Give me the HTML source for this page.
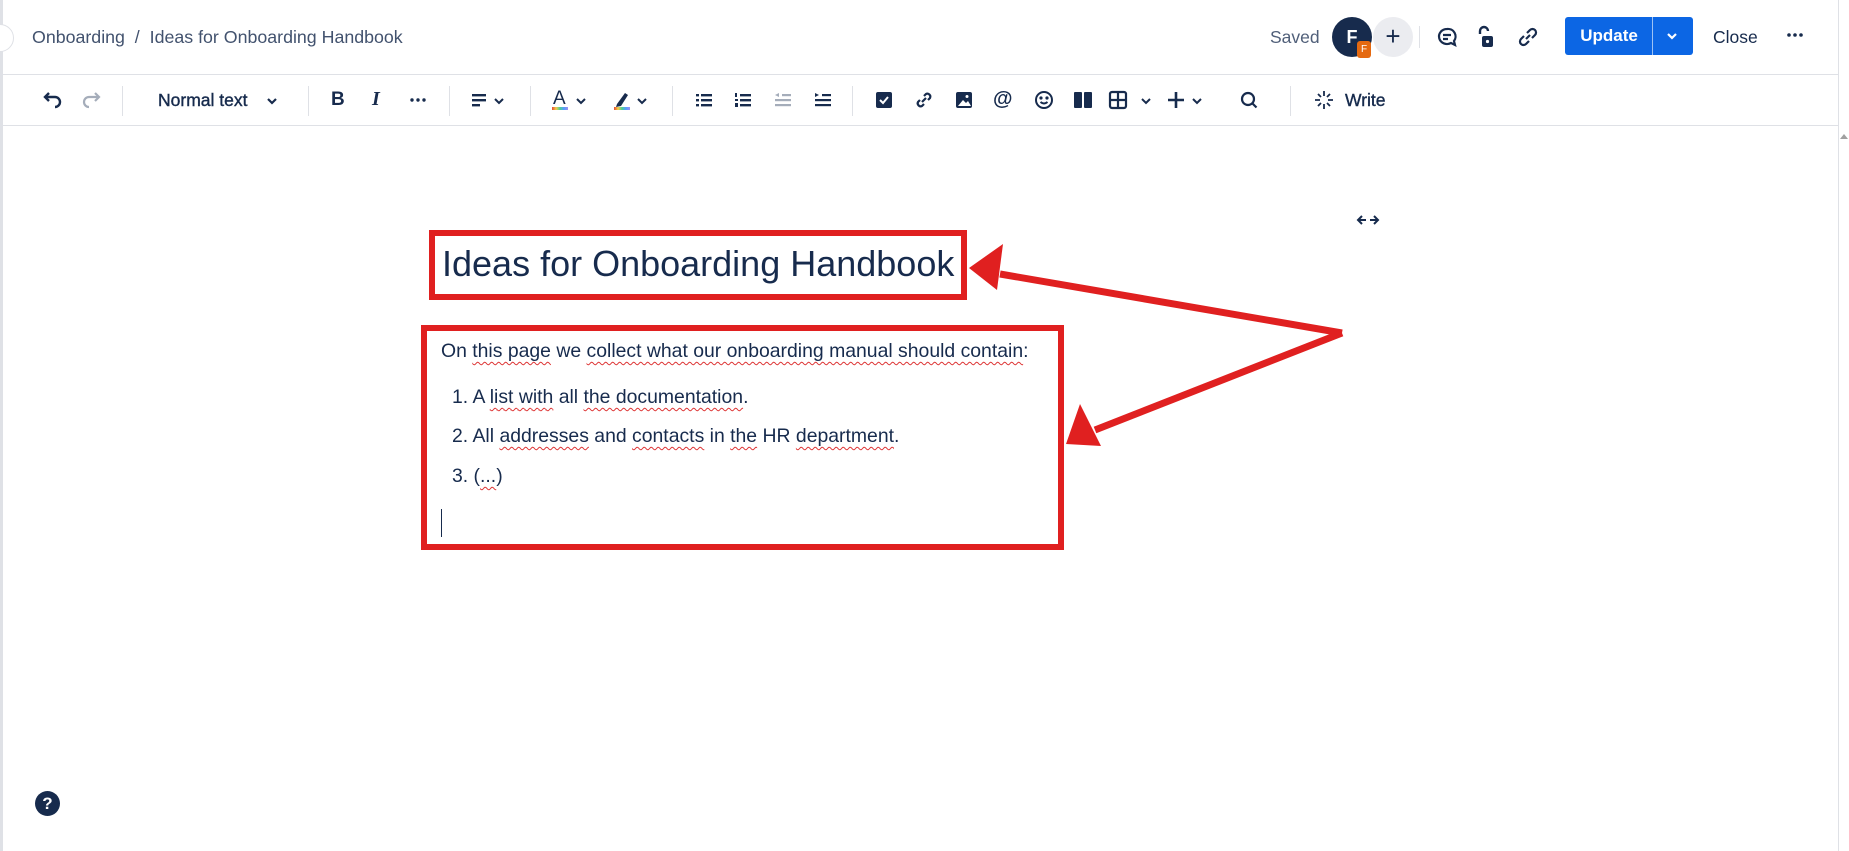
<!DOCTYPE html>
<html><head><meta charset="utf-8"><style>
*{margin:0;padding:0;box-sizing:border-box}
body{width:1849px;height:851px;position:relative;background:#fff;font-family:"Liberation Sans",sans-serif;color:#172b4d;overflow:hidden}
.a{position:absolute}
.t{position:absolute;white-space:nowrap}
.ic{position:absolute;top:89px;width:22px;height:22px}
.sep{position:absolute;top:86px;width:1px;height:30px;background:#dfe1e6}
.sq{text-decoration:underline wavy #d33;text-decoration-thickness:1px;text-underline-offset:4px}
</style></head><body>
<div class="a" style="left:0;top:0;width:3px;height:851px;background:#dfe1e6"></div>
<div class="a" style="left:-14px;top:24px;width:28px;height:28px;border-radius:50%;border:1px solid #dfe1e6;background:#fff"></div>
<div class="t" style="left:32px;top:27px;font-size:17.8px;color:#42526e">Onboarding &nbsp;/ &nbsp;Ideas for Onboarding Handbook</div>
<div class="t" style="left:1270px;top:27px;font-size:17.5px;color:#505f79">Saved</div>
<div class="a" style="left:1373px;top:17px;width:40px;height:40px;border-radius:50%;background:#ebecf0;text-align:center;line-height:38px;font-size:26px;color:#172b4d">+</div>
<div class="a" style="left:1332px;top:17px;width:40px;height:40px;border-radius:50%;background:#172b4d;color:#fff;text-align:center;line-height:40px;font-size:18px;font-weight:bold">F</div>
<div class="a" style="left:1357px;top:41px;width:14px;height:17px;border-radius:3px;background:#e56910;color:#fff;font-size:10px;text-align:center;line-height:17px">F</div>
<div class="a" style="left:1419px;top:26px;width:1px;height:22px;background:#dfe1e6"></div>
<svg class="a" style="left:1436px;top:26px" width="22" height="22" viewBox="0 0 22 22" fill="none" stroke="#172b4d" stroke-width="2.2"><path d="M11 3a8 7.5 0 1 0 4 14l4 2-1-4a7.5 7.5 0 0 0-7-12z"/><path d="M7 9h8M7 13h5"/></svg>
<svg class="a" style="left:1476px;top:25px" width="20" height="24" viewBox="0 0 20 24"><path d="M4 9V6a4 4 0 0 1 8 0" fill="none" stroke="#172b4d" stroke-width="2.4"/><rect x="6" y="11" width="11" height="11" rx="2" fill="#172b4d"/><circle cx="11.5" cy="16.5" r="1.6" fill="#fff"/></svg>
<svg class="a" style="left:1516px;top:25px" width="24" height="24" viewBox="0 0 24 24" fill="none" stroke="#172b4d" stroke-width="2.2"><path d="M10 14l4-4M8 11l-3 3a3.5 3.5 0 0 0 5 5l3-3M16 13l3-3a3.5 3.5 0 0 0-5-5l-3 3"/></svg>
<div class="a" style="left:1565px;top:17px;width:128px;height:38px;border-radius:3px;background:#0c66e4"></div>
<div class="t" style="left:1565px;top:26px;width:88px;text-align:center;color:#fff;font-size:17px;font-weight:bold">Update</div>
<div class="a" style="left:1652px;top:17px;width:1px;height:38px;background:#fff;opacity:.6"></div>
<svg class="a" style="left:1666px;top:31px" width="12" height="10" viewBox="0 0 12 10" fill="none" stroke="#fff" stroke-width="2.2"><path d="M2 3l4 4 4-4"/></svg>
<div class="t" style="left:1713px;top:27px;font-size:17.5px;color:#172b4d">Close</div>
<svg class="a" style="left:1787px;top:33px" width="16" height="4"><circle cx="2" cy="2" r="1.8" fill="#172b4d"/><circle cx="8" cy="2" r="1.8" fill="#172b4d"/><circle cx="14" cy="2" r="1.8" fill="#172b4d"/></svg>
<div class="a" style="left:0;top:74px;width:1838px;height:1px;background:#dfe1e6"></div>
<div class="a" style="left:0;top:125px;width:1838px;height:1px;background:#dfe1e6"></div>
<div class="a" style="left:1838px;top:0;width:11px;height:851px;background:#fff;border-left:1px solid #dfe1e6"></div>
<svg class="a" style="left:1840px;top:133px" width="8" height="8"><path d="M0 6l4-5 4 5z" fill="#a0a0a0"/></svg>

<!-- toolbar -->
<svg class="ic" style="left:41px" viewBox="0 0 22 22" fill="none" stroke="#172b4d" stroke-width="2.4"><path d="M5 8h9a5 5 0 0 1 0 10"/><path d="M8 4L4 8l4 4"/></svg>
<svg class="ic" style="left:81px" viewBox="0 0 22 22" fill="none" stroke="#a5adba" stroke-width="2.2"><path d="M17 8H8a5 5 0 0 0 0 10"/><path d="M14 4l4 4-4 4"/></svg>
<div class="sep" style="left:122px"></div>
<div class="t" style="left:158px;top:90px;font-size:17.5px;color:#172b4d;-webkit-text-stroke:0.4px #172b4d">Normal text</div>
<svg class="a" style="left:266px;top:96px" width="12" height="10" viewBox="0 0 12 10" fill="none" stroke="#172b4d" stroke-width="2.2"><path d="M2 3l4 4 4-4"/></svg>
<div class="sep" style="left:308px"></div>
<div class="t" style="left:331px;top:89px;font-size:19px;font-weight:bold">B</div>
<div class="t" style="left:372px;top:88px;font-size:20px;font-style:italic;font-family:'Liberation Serif',serif;font-weight:bold">I</div>
<svg class="a" style="left:410px;top:98px" width="16" height="4"><circle cx="2" cy="2" r="1.7" fill="#172b4d"/><circle cx="8" cy="2" r="1.7" fill="#172b4d"/><circle cx="14" cy="2" r="1.7" fill="#172b4d"/></svg>
<div class="sep" style="left:449px"></div>
<svg class="ic" style="left:470px" viewBox="0 0 22 22" fill="#172b4d"><rect x="2" y="5" width="14" height="2.4"/><rect x="2" y="10" width="14" height="2.4"/><rect x="2" y="15" width="8" height="2.4"/></svg>
<svg class="a" style="left:493px;top:96px" width="12" height="10" viewBox="0 0 12 10" fill="none" stroke="#172b4d" stroke-width="2"><path d="M2 3l4 4 4-4"/></svg>
<div class="sep" style="left:530px"></div>
<div class="t" style="left:553px;top:88px;font-size:19px">A</div>
<div class="a" style="left:552px;top:107px;width:16px;height:3px;background:linear-gradient(90deg,#e34935,#f5cd47,#4bce97,#579dff,#9f8fef)"></div>
<svg class="a" style="left:575px;top:96px" width="12" height="10" viewBox="0 0 12 10" fill="none" stroke="#172b4d" stroke-width="2"><path d="M2 3l4 4 4-4"/></svg>
<svg class="ic" style="left:612px" viewBox="0 0 22 22" fill="#172b4d"><path d="M5 15l8-11 3 2-7 11-5 1z"/></svg>
<div class="a" style="left:614px;top:107px;width:16px;height:3px;background:linear-gradient(90deg,#e34935,#f5cd47,#4bce97,#579dff,#9f8fef)"></div>
<svg class="a" style="left:636px;top:96px" width="12" height="10" viewBox="0 0 12 10" fill="none" stroke="#172b4d" stroke-width="2"><path d="M2 3l4 4 4-4"/></svg>
<div class="sep" style="left:672px"></div>
<svg class="ic" style="left:693px" viewBox="0 0 22 22" fill="#172b4d"><rect x="3" y="5" width="3" height="2.4"/><rect x="8" y="5" width="11" height="2.4"/><rect x="3" y="10" width="3" height="2.4"/><rect x="8" y="10" width="11" height="2.4"/><rect x="3" y="15" width="3" height="2.4"/><rect x="8" y="15" width="11" height="2.4"/></svg>
<svg class="ic" style="left:732px" viewBox="0 0 22 22" fill="#172b4d"><rect x="3" y="4" width="2" height="4"/><rect x="8" y="5" width="11" height="2.4"/><rect x="3" y="10" width="3" height="2"/><rect x="8" y="10" width="11" height="2.4"/><rect x="3" y="14" width="3" height="4"/><rect x="8" y="15" width="11" height="2.4"/></svg>
<svg class="ic" style="left:772px" viewBox="0 0 22 22" fill="#a5adba"><path d="M3 6l4-2v4z"/><rect x="3" y="10" width="16" height="2.2"/><rect x="10" y="5" width="9" height="2.2"/><rect x="3" y="15" width="16" height="2.2"/></svg>
<svg class="ic" style="left:812px" viewBox="0 0 22 22" fill="#172b4d"><path d="M7 6L3 4v4z"/><rect x="3" y="10" width="16" height="2.2"/><rect x="10" y="5" width="9" height="2.2"/><rect x="3" y="15" width="16" height="2.2"/></svg>
<div class="sep" style="left:852px"></div>
<svg class="ic" style="left:873px" viewBox="0 0 22 22"><rect x="3" y="3" width="16" height="16" rx="2" fill="#172b4d"/><path d="M7 11l3 3 5-6" fill="none" stroke="#fff" stroke-width="2"/></svg>
<svg class="ic" style="left:913px" viewBox="0 0 22 22" fill="none" stroke="#172b4d" stroke-width="2.2"><path d="M9 13l4-4M7 11l-2 2a3 3 0 0 0 4 4l2-2M15 11l2-2a3 3 0 0 0-4-4l-2 2"/></svg>
<svg class="ic" style="left:953px" viewBox="0 0 22 22"><rect x="3" y="3" width="16" height="16" rx="2" fill="#172b4d"/><path d="M5 17l5-6 3 3 2-2 3 5z" fill="#fff"/><circle cx="14" cy="7.5" r="1.5" fill="#fff"/></svg>
<div class="t" style="left:993px;top:88px;font-size:20px;font-weight:bold">@</div>
<svg class="ic" style="left:1033px" viewBox="0 0 22 22" fill="none" stroke="#172b4d" stroke-width="2"><circle cx="11" cy="11" r="8"/><circle cx="8" cy="9" r=".6" fill="#172b4d"/><circle cx="14" cy="9" r=".6" fill="#172b4d"/><path d="M7.5 13q3.5 3 7 0"/></svg>
<svg class="ic" style="left:1072px" viewBox="0 0 22 22" fill="#172b4d"><rect x="2" y="3" width="8" height="16" rx="1"/><rect x="12" y="3" width="8" height="16" rx="1"/></svg>
<svg class="ic" style="left:1107px" viewBox="0 0 22 22" fill="none" stroke="#172b4d" stroke-width="2.2"><rect x="3" y="3" width="16" height="16" rx="2"/><path d="M11 3v16M3 11h16"/></svg>
<svg class="a" style="left:1140px;top:96px" width="12" height="10" viewBox="0 0 12 10" fill="none" stroke="#172b4d" stroke-width="2"><path d="M2 3l4 4 4-4"/></svg>
<svg class="ic" style="left:1165px" viewBox="0 0 22 22" fill="none" stroke="#172b4d" stroke-width="2.6"><path d="M11 3v16M3 11h16"/></svg>
<svg class="a" style="left:1191px;top:96px" width="12" height="10" viewBox="0 0 12 10" fill="none" stroke="#172b4d" stroke-width="2"><path d="M2 3l4 4 4-4"/></svg>
<svg class="ic" style="left:1238px" viewBox="0 0 22 22" fill="none" stroke="#172b4d" stroke-width="2.2"><circle cx="10" cy="10" r="6"/><path d="M14.5 14.5l4 4"/></svg>
<div class="sep" style="left:1290px"></div>
<svg class="ic" style="left:1313px" viewBox="0 0 22 22" fill="none" stroke="#172b4d" stroke-width="1.8"><path d="M11 2v5M11 15v5M2 11h5M15 11h5M5 5l3 3M14 14l3 3M17 5l-3 3M8 14l-3 3"/></svg>
<div class="t" style="left:1345px;top:90px;font-size:17.5px;color:#172b4d;-webkit-text-stroke:0.4px #172b4d">Write</div>

<!-- content -->
<svg class="a" style="left:1356px;top:213px" width="24" height="14" viewBox="0 0 24 14" fill="none" stroke="#172b4d" stroke-width="2"><path d="M2 7h8M14 7h8M6 3L2 7l4 4M18 3l4 4-4 4"/></svg>
<div class="a" style="left:429px;top:230px;width:538px;height:70px;border:6px solid #e02020"></div>
<div class="t" style="left:442px;top:243px;font-size:36px;color:#172b4d">Ideas for Onboarding Handbook</div>
<div class="a" style="left:421px;top:325px;width:643px;height:225px;border:6px solid #e02020"></div>
<div class="t" style="left:441px;top:340px;font-size:19.4px">On <span class="sq">this page</span> we <span class="sq">collect what our onboarding manual should contain</span>:</div>
<div class="t" style="left:452px;top:386px;font-size:19.4px">1. A <span class="sq">list with</span> all <span class="sq">the documentation</span>.</div>
<div class="t" style="left:452px;top:425px;font-size:19.4px">2. All <span class="sq">addresses</span> and <span class="sq">contacts</span> in <span class="sq">the</span> HR <span class="sq">department</span>.</div>
<div class="t" style="left:452px;top:465px;font-size:19.4px">3. (<span class="sq">...</span>)</div>
<div class="a" style="left:441px;top:509px;width:1px;height:28px;background:#172b4d"></div>
<svg class="a" style="left:0;top:0" width="1849" height="851"><g stroke="#e02020" stroke-width="7" fill="#e02020"><line x1="1342" y1="333" x2="1000" y2="274"/><line x1="1342" y1="333" x2="1095" y2="430"/></g><path d="M969 268l34-24-6 46z" fill="#e02020"/><path d="M1066 444l14-40 21 42z" fill="#e02020"/></svg>
<div class="a" style="left:35px;top:791px;width:25px;height:25px;border-radius:50%;background:#172b4d;color:#fff;text-align:center;font-weight:bold;font-size:17px;line-height:25px">?</div>
</body></html>
